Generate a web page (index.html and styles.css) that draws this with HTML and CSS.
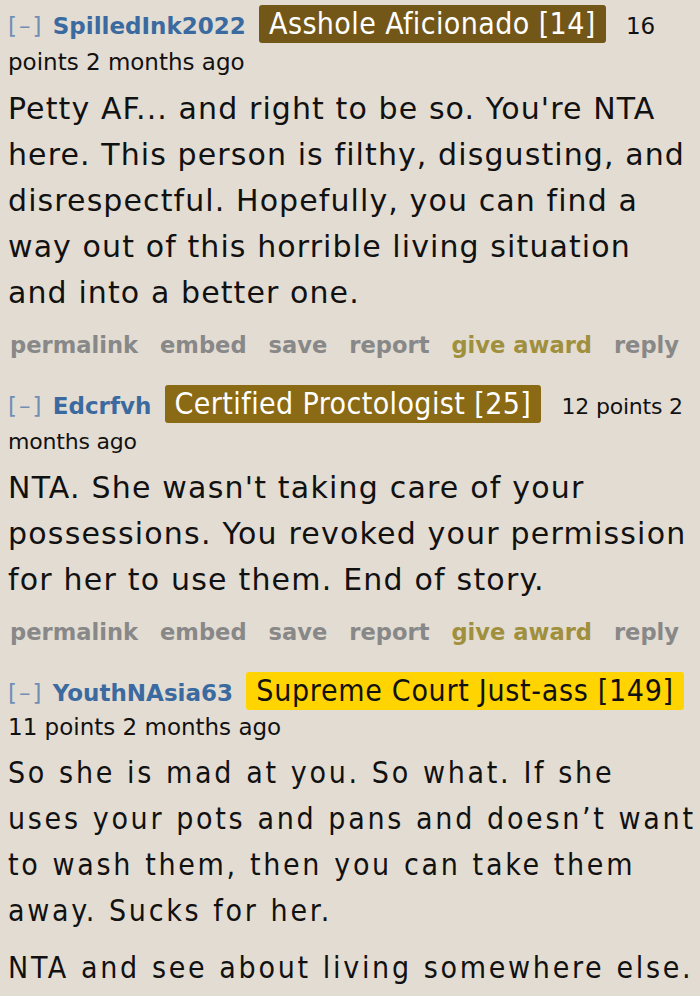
FILE: index.html
```html
<!DOCTYPE html>
<html>
<head>
<meta charset="utf-8">
<link rel="stylesheet" href="styles.css">
</head>
<body>
<div class="thread">
  <div class="comment">
    <div class="tagline">
      <span class="expand">[–]</span>
      <a class="author">SpilledInk2022</a>
      <span class="flair f-brown">Asshole Aficionado [14]</span>
      <span class="meta">16 points 2 months ago</span>
    </div>
    <div class="md c1">
      <p>Petty AF... and right to be so. You're NTA here. This person is filthy, disgusting, and disrespectful. Hopefully, you can find a way out of this horrible living situation and into a better one.</p>
    </div>
    <ul class="buttons">
      <li>permalink</li><li>embed</li><li>save</li><li>report</li><li class="award">give award</li><li>reply</li>
    </ul>
  </div>
  <div class="comment second">
    <div class="tagline">
      <span class="expand">[–]</span>
      <a class="author">Edcrfvh</a>
      <span class="flair f-olive">Certified Proctologist [25]</span>
      <span class="meta tight">12 points 2 months ago</span>
    </div>
    <div class="md c2">
      <p>NTA. She wasn't taking care of your possessions. You revoked your permission for her to use them. End of story.</p>
    </div>
    <ul class="buttons">
      <li>permalink</li><li>embed</li><li>save</li><li>report</li><li class="award">give award</li><li>reply</li>
    </ul>
  </div>
  <div class="comment third">
    <div class="tagline">
      <span class="expand">[–]</span>
      <a class="author">YouthNAsia63</a>
      <span class="flair f-gold">Supreme Court Just-ass [149]</span>
      <span class="meta">11 points 2 months ago</span>
    </div>
    <div class="md c3">
      <p>So she is mad at you. So what. If she<br>uses your pots and pans and doesn’t want<br>to wash them, then you can take them<br>away. Sucks for her.</p>
      <p>NTA and see about living somewhere else.</p>
    </div>
  </div>
</div>
</body>
</html>
```

FILE: styles.css
```css
html, body {
  margin: 0;
  padding: 0;
  background: #e3dcd2;
}
body {
  font-family: "DejaVu Sans", Verdana, sans-serif;
  color: #111;
}
.thread {
  padding: 7px 8px 0 8px;
}
.comment.second {
  margin-top: 22px;
}
.comment.third {
  margin-top: 22px;
}
.tagline {
  font-size: 23px;
  line-height: 36px;
  color: #111;
}
.second .tagline {
  line-height: 35px;
}
.third .tagline {
  line-height: 34px;
}
.expand {
  color: #6f8fb5;
  letter-spacing: 2px;
  margin-right: 2px;
}
.author {
  color: #3a6a9f;
  font-weight: bold;
  margin-right: 6px;
}
.flair {
  display: inline-block;
  font-stretch: condensed;
  font-size: 30px;
  letter-spacing: 0.4px;
  line-height: 38px;
  margin: -2px 13px -2px 0;
  padding: 0 10px;
  border-radius: 3px;
}
.f-brown { background: #725719; color: #fff; }
.f-olive { background: #8b6a15; color: #fff; }
.f-gold {
  background: #ffd400;
  color: #111;
  letter-spacing: 0.7px;
  margin-right: 0;
}
.meta.tight {
  font-size: 22px;
  letter-spacing: -0.2px;
}
.md {
  margin-top: 6px;
  font-size: 30px;
  line-height: 46px;
}
.md.c1 { letter-spacing: 1.1px; }
.md.c2 { letter-spacing: 1.2px; }
.md.c3 {
  font-stretch: condensed;
  letter-spacing: 2.7px;
  word-spacing: 0.8px;
  white-space: nowrap;
}
.md p {
  margin: 0 0 11px 0;
}
.md p:last-child {
  margin-bottom: 0;
}
.buttons {
  list-style: none;
  margin: 9px 0 0 0;
  padding: 0 0 0 2px;
  display: flex;
  gap: 22px;
  font-size: 22.6px;
  font-weight: bold;
  color: #888;
  line-height: 40px;
  white-space: nowrap;
}
.buttons .award {
  color: #a08f3c;
}
```
